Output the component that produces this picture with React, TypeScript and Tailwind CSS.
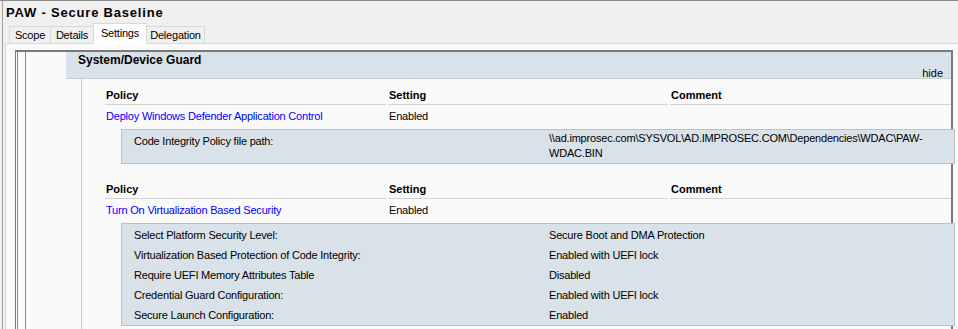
const TABS = [
  { label: "Scope", w: "w-[42px] border-l", active: false },
  { label: "Details", w: "w-[43px]", active: false },
  { label: "Settings", w: "w-[54px] -ml-px border-l", active: true },
  { label: "Delegation", w: "w-[58px]", active: false },
];

const VBS_OPTIONS = [
  ["Select Platform Security Level:", "Secure Boot and DMA Protection"],
  ["Virtualization Based Protection of Code Integrity:", "Enabled with UEFI lock"],
  ["Require UEFI Memory Attributes Table", "Disabled"],
  ["Credential Guard Configuration:", "Enabled with UEFI lock"],
  ["Secure Launch Configuration:", "Enabled"],
];

function PolicyHeader({ mt }: { mt: string }) {
  return (
    <div className={`${mt} grid grid-cols-[281px_280px_281px] gap-x-[2px] text-[11px] font-bold`}>
      {["Policy", "Setting", "Comment"].map((h) => (
        <div key={h} className="h-[18px] border-b border-[#d3d3d3] pl-[1px] leading-[17px]">
          {h}
        </div>
      ))}
    </div>
  );
}

function PolicyRow({ name, setting }: { name: string; setting: string }) {
  return (
    <div className="mt-[3px] grid h-[17px] grid-cols-[281px_280px_281px] gap-x-[2px] text-[11px] leading-[17px] tracking-[-0.2px]">
      <div className="pl-[1px] text-[#0000ff]">{name}</div>
      <div className="pl-[1px]">{setting}</div>
      <div />
    </div>
  );
}

export default function App() {
  return (
    <div className="h-[329px] w-[958px] overflow-hidden border-t border-[#8a8a8a] bg-[#f0f0f0] font-['Liberation_Sans',Arial,sans-serif] text-black">
      <div className="ml-[2px] h-full border-l border-[#a0a0a0]">
        <div className="h-[21px] pl-[3px] pt-[2px] text-[13px] font-bold leading-[19px] tracking-[0.8px]">
          PAW - Secure Baseline
        </div>

        <div className="flex h-[21px] items-end pl-[6px] text-[11px] tracking-[-0.2px]">
          {TABS.map((t) => (
            <div
              key={t.label}
              className={`${t.w} flex items-center justify-center border-r border-t border-[#d9d9d9] ${
                t.active ? "relative z-10 -mb-px h-[21px] bg-white pb-[2px]" : "h-[17px] bg-[#f0f0f0]"
              }`}
            >
              {t.label}
            </div>
          ))}
        </div>

        <div className="ml-[2px] h-[300px] border-l border-t border-[#d9d9d9] bg-[#fafafa] pt-[6px]">
          <div className="ml-[9px] h-[300px] w-[938px] border-l border-r-2 border-t-2 border-[#7a7a7a]">
            <div className="ml-[1px] h-full border-l border-[#8c8c8c]">
              <div className="ml-[7px] h-full border-l border-[#8c8c8c]">
                <div className="ml-[40px]">
                  <div className="flex h-[27px] justify-between border-b border-[#c8cfd4] bg-[#d9e2e8] pl-[12px] pr-[8px]">
                    <span className="self-start text-[12px] font-bold leading-[16px]">System/Device Guard</span>
                    <span className="-mb-px self-end text-[11px] leading-[12px]">hide</span>
                  </div>

                  <div className="ml-[15px] h-[260px] border-l border-[#c8c8c8] pl-[23px] pt-[8px]">
                    <PolicyHeader mt="mt-0" />
                    <PolicyRow name="Deploy Windows Defender Application Control" setting="Enabled" />
                    <div className="ml-[16px] mt-[4px] grid h-[35px] w-[834px] grid-cols-[415px_1fr] border border-[#b9c1c8] bg-[#d9e2e8] pl-[12px] text-[11px] leading-[15px] tracking-[-0.2px]">
                      <div className="pt-[4px]">Code Integrity Policy file path:</div>
                      <div className="pt-[1px]">
                        \\ad.improsec.com\SYSVOL\AD.IMPROSEC.COM\Dependencies\WDAC\PAW-
                        <br />
                        WDAC.BIN
                      </div>
                    </div>

                    <PolicyHeader mt="mt-[17px]" />
                    <PolicyRow name="Turn On Virtualization Based Security" setting="Enabled" />
                    <div className="ml-[16px] mt-[4px] w-[834px] border border-[#b9c1c8] bg-[#d9e2e8] pl-[12px] pt-[1px] text-[11px] tracking-[-0.2px]">
                      {VBS_OPTIONS.map(([label, value]) => (
                        <div key={label} className="grid h-[20px] grid-cols-[415px_1fr] leading-[20px]">
                          <div>{label}</div>
                          <div>{value}</div>
                        </div>
                      ))}
                    </div>
                  </div>
                </div>
              </div>
            </div>
          </div>
        </div>
      </div>
    </div>
  );
}
